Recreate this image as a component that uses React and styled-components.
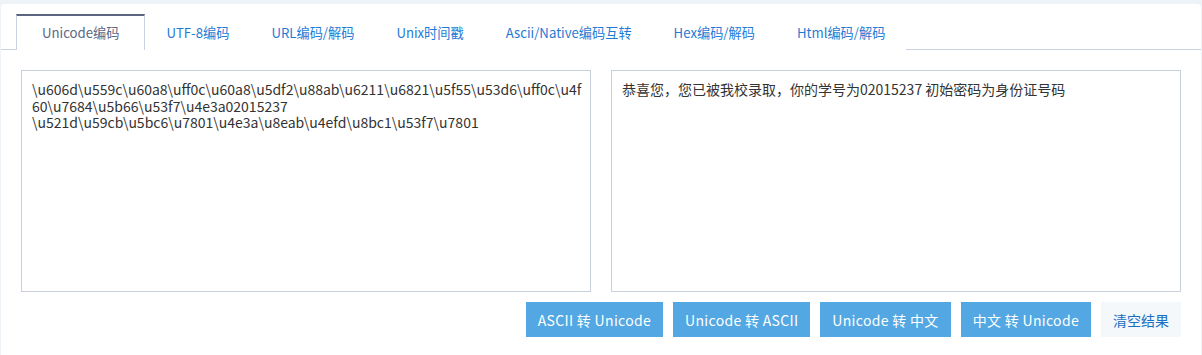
import React, { useState } from "react";
import styled, { createGlobalStyle } from "styled-components";

const GlobalStyle = createGlobalStyle`
  html, body {
    margin: 0;
    padding: 0;
    background: #eef3f8;
    font-family: "Noto Sans CJK SC", "Noto Sans", sans-serif;
  }
`;

const Page = styled.div`
  padding: 4px 1px 0 1px;
  height: 355px;
  box-sizing: border-box;
  overflow: hidden;
`;

const Panel = styled.div`
  background: #fff;
  border-radius: 4px 4px 0 0;
  padding-top: 10px;
  min-height: 400px;
`;

const TabBar = styled.ul`
  display: flex;
  list-style: none;
  margin: 0;
  padding: 0 0 0 15px;
  border-bottom: 1px solid #c9d2e0;
`;

const Tab = styled.li`
  height: 33px;
  line-height: 33px;
  padding: 0 ${(p) => (p.$active ? "25px" : "20px")} 1px;
  font-size: 13.2px;
  color: ${(p) => (p.$active ? "#5b6885" : "#1f7bd4")};
  background: #fff;
  border: 1px solid ${(p) => (p.$active ? "#c9d2e0" : "transparent")};
  border-top: 2px solid ${(p) => (p.$active ? "#5a6580" : "transparent")};
  border-bottom: none;
  margin-bottom: -1px;
  cursor: pointer;
  white-space: nowrap;
`;

const Content = styled.div`
  padding: 20px 20px 0 20px;
`;

const Editors = styled.div`
  display: grid;
  grid-template-columns: 1fr 1fr;
  gap: 20px;
`;

const TextBox = styled.textarea`
  display: block;
  box-sizing: border-box;
  width: 100%;
  height: 222px;
  margin: 0;
  padding: 10px 8px 10px 10px;
  border: 1px solid #c8d0dc;
  border-radius: 0;
  resize: none;
  overflow: hidden;
  outline: none;
  font-family: "Noto Sans CJK SC", "Noto Sans", sans-serif;
  font-size: 14px;
  line-height: 16.5px;
  color: #333;
`;

const Actions = styled.div`
  display: flex;
  justify-content: flex-end;
  gap: 10px;
  margin-top: 10px;
`;

const Button = styled.button`
  height: 35px;
  padding: 0 12px;
  border: none;
  border-radius: 0;
  font-family: "Noto Sans CJK SC", "Noto Sans", sans-serif;
  font-size: 14px;
  letter-spacing: ${(p) => (p.$plain ? "0" : "0.32px")};
  color: ${(p) => (p.$plain ? "#1a6fc4" : "#fff")};
  background: ${(p) => (p.$plain ? "#f4f8fb" : "#53a7e2")};
  cursor: pointer;
  white-space: pre;
`;

const tabs = [
  "Unicode编码",
  "UTF-8编码",
  "URL编码/解码",
  "Unix时间戳",
  "Ascii/Native编码互转",
  "Hex编码/解码",
  "Html编码/解码",
];

const source =
  "\\u606d\\u559c\\u60a8\\uff0c\\u60a8\\u5df2\\u88ab\\u6211\\u6821\\u5f55\\u53d6\\uff0c\\u4f60\\u7684\\u5b66\\u53f7\\u4e3a02015237 \\u521d\\u59cb\\u5bc6\\u7801\\u4e3a\\u8eab\\u4efd\\u8bc1\\u53f7\\u7801";

const result = "恭喜您，您已被我校录取，你的学号为02015237 初始密码为身份证号码";

export default function App() {
  const [active, setActive] = useState(0);
  const [left, setLeft] = useState(source);
  const [right, setRight] = useState(result);

  return (
    <Page>
      <GlobalStyle />
      <Panel>
        <TabBar>
          {tabs.map((t, i) => (
            <Tab key={t} $active={i === active} onClick={() => setActive(i)}>
              {t}
            </Tab>
          ))}
        </TabBar>
        <Content>
          <Editors>
            <TextBox value={left} onChange={(e) => setLeft(e.target.value)} />
            <TextBox value={right} onChange={(e) => setRight(e.target.value)} />
          </Editors>
          <Actions>
            <Button>ASCII 转 Unicode</Button>
            <Button>Unicode 转 ASCII</Button>
            <Button>Unicode 转 中文</Button>
            <Button>中文 转 Unicode</Button>
            <Button $plain onClick={() => setRight("")}>
              清空结果
            </Button>
          </Actions>
        </Content>
      </Panel>
    </Page>
  );
}
